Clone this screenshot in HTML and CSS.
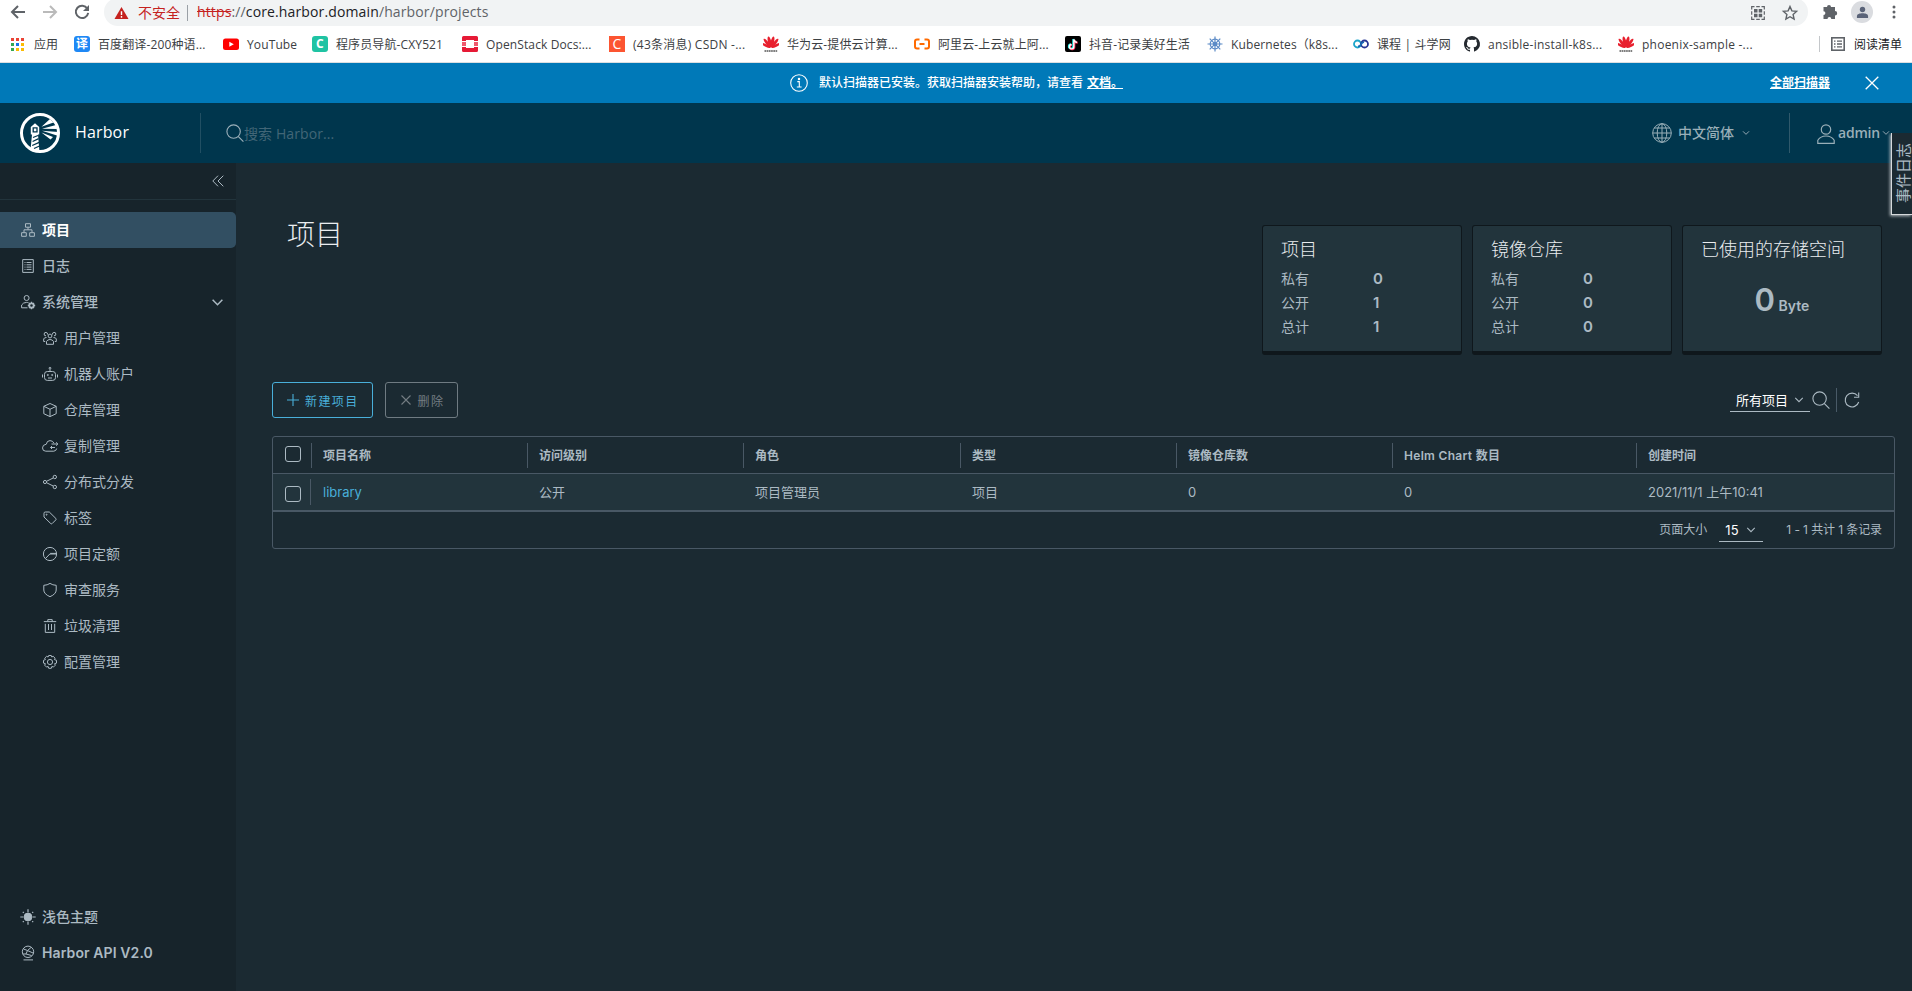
FILE: index.html
```html
<!DOCTYPE html>
<html lang="zh-CN">
<head>
    <meta charset="UTF-8">
    <meta name="viewport" content="width=device-width, initial-scale=1.0">
    <title>Harbor</title>
    <link rel="stylesheet" href="styles.css">
</head>
<body>
    <!-- Icon definitions -->
    <svg class="icon-defs">
        <symbol id="i-huawei" viewBox="0 0 16 16">
            <g fill="#e8202e">
                <ellipse cx="8" cy="5.800" rx="1.700" ry="5.600" transform="rotate(-13 8 12)"/>
                <ellipse cx="8" cy="5.800" rx="1.700" ry="5.600" transform="rotate(13 8 12)"/>
                <ellipse cx="8" cy="5.700" rx="1.500" ry="5.300" transform="rotate(-38 8 12)"/>
                <ellipse cx="8" cy="5.700" rx="1.500" ry="5.300" transform="rotate(38 8 12)"/>
                <ellipse cx="8" cy="6.500" rx="1.300" ry="4.700" transform="rotate(-64 8 12)"/>
                <ellipse cx="8" cy="6.500" rx="1.300" ry="4.700" transform="rotate(64 8 12)"/>
            </g>
            <path d="M1.500 15h13" stroke="#555" stroke-width="1.600" stroke-dasharray="1.700 .5"/>
        </symbol>
        <symbol id="i-search" viewBox="0 0 18 18">
            <circle cx="7.6" cy="7.6" r="6.7"/><path d="M12.4 12.6l5 5"/>
        </symbol>
        <symbol id="i-down" viewBox="0 0 12 12">
            <path d="M1.5 3.5L6 8l4.500-4.500"/>
        </symbol>
    </svg>

    <!-- Browser chrome -->
    <div class="toolbar">
        <svg class="tool-icon back" viewBox="0 0 16 16"><path d="M15 8H2M8 2L2 8l6 6"/></svg>
        <svg class="tool-icon forward" viewBox="0 0 16 16"><path d="M1 8h13M8 2l6 6-6 6"/></svg>
        <svg class="tool-icon reload" viewBox="0 0 16 16"><path d="M13.300 4.500A6.200 6.200 0 1 0 14.200 8.800"/><path d="M15 1v6H9z" class="solid"/></svg>
        <div class="address">
            <svg class="warn" viewBox="0 0 16 14"><path d="M8 .5L15.500 13.500H.5z" fill="#c5221f"/><path d="M8 5v4M8 10.300v1.700" stroke="#fff" stroke-width="1.500"/></svg>
            <span class="insecure">不安全</span>
            <span class="bar"></span>
            <span class="url"><s>https</s>://<b>core.harbor.domain</b>/harbor/projects</span>
            <svg class="qr" viewBox="0 0 14 14"><path d="M.7 3.500V.7h2.800M10.500.7h2.800v2.800M13.300 10.500v2.800h-2.800M3.500 13.300H.7v-2.800M5.200.7h3.600M5.200 13.300h3.600M.7 5.200v3.600M13.300 5.200v3.600" fill="none" stroke="#5f6368" stroke-width="1.200"/><path d="M3 3h3.500v3.500H3zM7.700 3h3.500v3.500H7.700zM3 7.700h3.500v3.500H3zM7.700 7.700h3.500v3.500H7.700z" fill="#5f6368"/></svg>
            <svg class="star" viewBox="0 0 16 16"><path d="M8 1.600l1.900 4.300 4.700.5-3.500 3.100 1 4.600L8 11.700l-4.100 2.400 1-4.600L1.400 6.400l4.700-.5z" fill="none" stroke="#5f6368" stroke-width="1.400"/></svg>
        </div>
        <svg class="puzzle" viewBox="0 0 16 16"><path d="M5 3a2 2 0 0 1 4 0h4v4a2.200 2.200 0 0 1 0 4.400V15H9.300a1.900 1.900 0 0 0-3.800 0H1.500v-4a1.900 1.900 0 0 0 0-3.800V3z" fill="#5f6368"/></svg>
        <span class="avatar"><svg viewBox="0 0 14 14"><circle cx="7" cy="3.700" r="2.900"/><path d="M1 13V10.800C1 8.600 4 7.700 7 7.700s6 .9 6 3.100V13z"/></svg></span>
        <svg class="dots" viewBox="0 0 4 16"><circle cx="2" cy="3" r="1.500"/><circle cx="2" cy="8" r="1.500"/><circle cx="2" cy="13" r="1.500"/></svg>
    </div>

    <div class="bookmarks">
        <div class="bookmark apps">
            <svg viewBox="0 0 13 13"><path d="M0 0h3v3H0zM5 0h3v3H5zM10 0h3v3h-3z" fill="#ea4335"/><path d="M0 5h3v3H0zM0 10h3v3H0z" fill="#34a853"/><path d="M5 5h3v3H5z" fill="#1a73e8"/><path d="M10 5h3v3h-3zM5 10h3v3H5zM10 10h3v3h-3z" fill="#fbbc04"/></svg>
            <span>应用</span>
        </div>
        <div class="bookmark"><i class="fav fav-fanyi">译</i><span>百度翻译-200种语...</span></div>
        <div class="bookmark"><svg viewBox="0 0 16 16"><rect y="2.500" width="16" height="11.500" rx="2.500" fill="#f00"/><path d="M6.300 5.800l4.500 2.500-4.500 2.500z" fill="#fff"/></svg><span>YouTube</span></div>
        <div class="bookmark"><i class="fav fav-cxy">C</i><span>程序员导航-CXY521</span></div>
        <div class="bookmark"><svg viewBox="0 0 16 16"><path d="M0 5V1.500Q0 0 1.500 0h13Q16 0 16 1.500V5h-4V4H4v1zM0 11v3.500Q0 16 1.500 16h13q1.500 0 1.500-1.500V11h-4v1H4v-1z" fill="#e61a36"/><path d="M0 6h4v4H0zM12 6h4v4h-4z" fill="#ef5a6e"/></svg><span>OpenStack Docs:...</span></div>
        <div class="bookmark"><i class="fav fav-csdn">C</i><span class="wide">(43条消息) CSDN -...</span></div>
        <div class="bookmark"><svg><use href="#i-huawei"/></svg><span>华为云-提供云计算...</span></div>
        <div class="bookmark"><svg viewBox="0 0 16 16"><path d="M5.500 3.500H3Q1 3.500 1 5.500v5q0 2 2 2h2.500M10.500 3.500H13q2 0 2 2v5q0 2-2 2h-2.500M5.500 8h5" fill="none" stroke="#ff6a00" stroke-width="2"/></svg><span>阿里云-上云就上阿...</span></div>
        <div class="bookmark"><svg viewBox="0 0 16 16"><rect width="16" height="16" rx="2" fill="#000"/><g fill="none" stroke-width="1.900"><path d="M8.200 3v7.300a2.200 2.200 0 1 1-2.200-2.200M8.200 3q.4 2.700 3.300 3" stroke="#25f4ee"/><path d="M9.400 3.800v7.200A2.200 2.200 0 1 1 7 8.900M9.400 3.800q.4 2.700 3.300 3" stroke="#fe2c55"/><path d="M8.800 3.400v7.200a2.200 2.200 0 1 1-2.300-2.100M8.800 3.400q.4 2.700 3.300 3" stroke="#fff" stroke-width="1.400"/></g></svg><span>抖音-记录美好生活</span></div>
        <div class="bookmark"><svg viewBox="0 0 16 16"><g fill="none" stroke="#5b8ac6" stroke-width="1.200"><circle cx="8" cy="8" r="4.800"/><path d="M8 .5v15M.5 8h15M2.700 2.700l10.600 10.600M13.300 2.700L2.700 13.300"/></g><circle cx="8" cy="8" r="2.300" fill="#5b8ac6"/></svg><span>Kubernetes（k8s...</span></div>
        <div class="bookmark"><svg viewBox="0 0 16 16"><g fill="none" stroke-width="1.800"><circle cx="4.500" cy="8" r="3.500" stroke="#1ca5c9"/><circle cx="11.500" cy="8" r="3.500" stroke="#283593"/><path d="M5 10.500q2 0 3-2t3-2.500" stroke="#1769b5"/></g></svg><span>课程 | 斗学网</span></div>
        <div class="bookmark"><svg viewBox="0 0 16 16"><path d="M8 0C3.580 0 0 3.580 0 8c0 3.540 2.290 6.530 5.470 7.590.4.070.55-.17.55-.38v-1.490C4 14.090 3.480 13.220 3.320 12.770c-.09-.23-.48-.94-.82-1.130-.28-.15-.68-.52-.01-.53.63-.01 1.080.58 1.230.82.720 1.210 1.870.87 2.330.66.070-.52.28-.87.510-1.070-1.780-.2-3.640-.89-3.640-3.950 0-.87.31-1.590.82-2.150-.08-.2-.36-1.020.080-2.120 0 0 .67-.21 2.200.82a7.600 7.600 0 0 1 4 0c1.530-1.040 2.200-.82 2.200-.82.440 1.100.160 1.920.080 2.120.51.56.82 1.270.82 2.150 0 3.070-1.870 3.750-3.650 3.950.29.250.54.730.54 1.480v2.200c0 .21.150.46.550.38A8 8 0 0 0 8 0z" fill="#24292f"/></svg><span class="wide">ansible-install-k8s...</span></div>
        <div class="bookmark"><svg><use href="#i-huawei"/></svg><span class="wide">phoenix-sample -...</span></div>
        <div class="bookmark reading">
            <svg viewBox="0 0 14 14"><rect x=".8" y=".8" width="12.400" height="12.400" fill="none" stroke="#5f6368" stroke-width="1.600"/><path d="M3 4.200h1.500M3 7h1.500M3 9.800h1.500M6 4.200h5M6 7h5M6 9.800h5" stroke="#5f6368" stroke-width="1.300"/></svg>
            <span>阅读清单</span>
        </div>
    </div>

    <!-- Scanner notice -->
    <div class="notice">
        <div class="notice-text">
            <svg viewBox="0 0 18 18"><circle cx="9" cy="9" r="8.300"/><path d="M7.300 7.600h2v5.400M6.800 13h4.800"/><circle cx="9" cy="5" r=".7" fill="#fff"/></svg>
            <span>默认扫描器已安装。获取扫描器安装帮助，请查看</span>
            <a>文档。</a>
        </div>
        <a class="all-scanners">全部扫描器</a>
        <svg class="close" viewBox="0 0 14 14"><path d="M.7.7l12.600 12.600M13.300.7L.7 13.300"/></svg>
    </div>

    <!-- Header -->
    <header class="header">
        <svg class="logo" viewBox="0 0 40 40">
            <circle cx="20" cy="20" r="18.500" fill="none" stroke="#fff" stroke-width="3"/>
            <path d="M10.500 37l1.500-15.500h-1.200V14l4.200-3.800 4.200 3.800v7.500H18L19.500 39q-5 0-9-2z" fill="#fff"/>
            <path d="M13.200 14.800h3.800v4h-3.800zM13 24.500l5-2M12.600 28.500l6-2.800M12.200 32.500l7-3.200M14 35.500l5.500-2.500" fill="none" stroke="#00364d" stroke-width="1.300"/>
            <path d="M21.500 13.800L30 6l3.500 3.500zM22 15.800L36 12l1 4zM22 17.800L38.500 19v4zM21.500 19.500L33 24l-2.500 2.500z" fill="#fff"/>
        </svg>
        <span class="brand">Harbor</span>
        <div class="search">
            <svg><use href="#i-search"/></svg>
            <span>搜索 Harbor...</span>
        </div>
        <div class="lang">
            <svg class="globe" viewBox="0 0 20 20"><circle cx="10" cy="10" r="9.300"/><ellipse cx="10" cy="10" rx="4.800" ry="9.300"/><path d="M10 .7v18.600M.7 10h18.600M2.300 5h15.400M2.300 15h15.400"/></svg>
            <span>中文简体</span>
            <svg class="caret"><use href="#i-down"/></svg>
        </div>
        <div class="user">
            <svg class="person" viewBox="0 0 18 20"><circle cx="9" cy="5.500" r="4.700"/><path d="M.8 19.300v-3q2.700-4.300 8.200-4.300t8.200 4.300v3z"/></svg>
            <span>admin</span>
            <svg class="caret"><use href="#i-down"/></svg>
        </div>
    </header>

    <div class="event-log"><span>事件日志</span></div>

    <div class="layout">
        <!-- Sidebar -->
        <nav class="sidebar">
            <div class="collapse"><svg viewBox="0 0 12 12"><path d="M6 .7L.8 6 6 11.300M11.300.7L6 6l5.300 5.300"/></svg></div>
            <a class="item active"><svg viewBox="0 0 14 14"><path d="M4.500.7h5v3.500h-5zM.6 9.700h4.700v3.600H.6zM8.700 9.700h4.700v3.600H8.700zM7 4.200v2.500M3 9.500V6.800h8v2.700"/></svg>项目</a>
            <a class="item"><svg viewBox="0 0 14 14"><path d="M1.700.6h10.600v12.800H1.700zM3.500 3.500h1M5.500 3.500h5M3.500 5.800h1M5.500 5.800h5M3.500 8.100h1M5.500 8.100h5M3.500 10.400h1M5.500 10.400h5"/></svg>日志</a>
            <a class="item"><svg viewBox="0 0 14 14"><circle cx="5.600" cy="3" r="2.500"/><path d="M6.500 12.800H.6V10q1.600-2.600 5-2.600 1.200 0 2 .4"/><circle cx="10.500" cy="10.500" r="2.200" stroke-width="1.800"/><path d="M10.500 6.800v1.500M10.500 12.700v1.500M6.800 10.500h1.500M12.700 10.500h1.500M8 8l.8.8M12.200 12.200l.8.8M8 13l.8-.8M12.200 8.800L13 8" stroke-width="1.300"/></svg>系统管理<svg class="expand"><use href="#i-down"/></svg></a>
            <a class="item sub"><svg viewBox="0 0 14 14"><circle cx="7" cy="5" r="1.900"/><path d="M3.500 13.300V10.500Q4.500 8.500 7 8.500t3.500 2v2.800zM4.500 3.500A1.700 1.700 0 1 0 3 4.800M9.500 3.500A1.700 1.700 0 1 1 11 4.800M3.500 6.500Q1 6.500.7 8v2.500h1.500M10.500 6.500q2.500 0 2.800 1.500v2.500h-1.500"/></svg>用户管理</a>
            <a class="item sub"><svg viewBox="0 0 14 14"><rect x="1.500" y="4.500" width="11" height="8.900" rx="2.800"/><path d="M7 4.500V2.300M-.5 7.500v3M14.500 7.500v3M5 11h4"/><circle cx="7" cy="1.200" r=".9"/><circle cx="4.800" cy="8" r=".6"/><circle cx="9.200" cy="8" r=".6"/></svg>机器人账户</a>
            <a class="item sub"><svg viewBox="0 0 14 14"><path d="M7 .5l6.200 2.800v7.400L7 13.600l-6.200-2.900V3.300zM.8 3.300L7 6.300l6.200-3M7 6.300v7.200"/></svg>仓库管理</a>
            <a class="item sub"><svg viewBox="0 0 14 14"><path d="M11 4.200Q9.800 1.600 7 1.600 3.800 1.600 3.300 5.200-.5 5.700-.5 8.900q0 3.300 3.300 3.300h8q2.500-.3 2.900-2.700M8.500 5H15M13 3.300L14.800 5 13 6.700M12 8.500H7.500M9 7L7.500 8.500 9 10"/></svg>复制管理</a>
            <a class="item sub"><svg viewBox="0 0 14 14"><circle cx="2" cy="7" r="1.600"/><circle cx="11.800" cy="2" r="1.700"/><circle cx="11.800" cy="12" r="1.700"/><path d="M3.500 6.300L10.200 3M3.500 7.700L10.200 11"/></svg>分布式分发</a>
            <a class="item sub"><svg viewBox="0 0 14 14"><path d="M1 2.300V6l6.800 6.600q.7.500 1.300 0l3.800-3.800q.5-.7 0-1.300L6.300 1H2.300Q1 1 1 2.300z"/><circle cx="3.600" cy="3.700" r=".5"/></svg>标签</a>
            <a class="item sub"><svg viewBox="0 0 14 14"><circle cx="7" cy="7" r="6.600"/><path d="M2.500 11.500L6.800 7H13.300M7.200 6.400h6.100"/></svg>项目定额</a>
            <a class="item sub"><svg viewBox="0 0 14 14"><path d="M7 .4q2.600 1.800 6.200 1.900v4.700q0 4-6.200 6.700-6.200-2.700-6.200-6.700V2.300Q4.400 2.200 7 .4z"/></svg>审查服务</a>
            <a class="item sub"><svg viewBox="0 0 14 14"><path d="M.8 2.600h12.400M4.800 2.500V.6h4.400v1.900M2.300 4.800v8.600h9.400V4.800M5.500 5v6M8.500 5v6"/></svg>垃圾清理</a>
            <a class="item sub"><svg viewBox="0 0 14 14"><circle cx="7" cy="7" r="2.600"/><path d="M5.700.5h2.600l.5 1.500 1.400-.7 1.900 1.900-.7 1.400 2.100.7v2.800l-1.900.6.700 1.500-1.900 1.900-1.500-.7-.6 1.900H5.700l-.6-1.900-1.500.7-1.900-1.900.7-1.500L.5 8.100V5.300l1.900-.7-.7-1.400 1.900-1.900 1.500.7z"/></svg>配置管理</a>
            <div class="sidebar-bottom">
                <a class="item"><svg viewBox="0 0 14 14"><circle cx="7" cy="7" r="3.900" fill="#acbac3"/><path d="M7-.7v3M7 11.700v3M-.7 7h3M11.700 7h3M1.800 1.800l1 1M11.200 11.200l1 1M1.800 12.200l1-1M11.200 2.800l1-1" stroke-width="1.200"/></svg>浅色主题</a>
                <a class="item api"><svg viewBox="0 0 14 14"><circle cx="7" cy="5.800" r="5.700"/><path d="M2.500 3l4 1.500L10 1.500M6.500 4.500L5 8l5.500 1.500M5 8L2 8M6.500 4.500L12 7M2.500 13.900h9.500"/></svg>Harbor API V2.0</a>
            </div>
        </nav>

        <!-- Content -->
        <main class="content">
            <section class="summary">
                <h1>项目</h1>
                <div class="card">
                    <h2>项目</h2>
                    <dl><dt>私有</dt><dd>0</dd><dt>公开</dt><dd>1</dd><dt>总计</dt><dd>1</dd></dl>
                </div>
                <div class="card">
                    <h2>镜像仓库</h2>
                    <dl><dt>私有</dt><dd>0</dd><dt>公开</dt><dd>0</dd><dt>总计</dt><dd>0</dd></dl>
                </div>
                <div class="card">
                    <h2>已使用的存储空间</h2>
                    <p class="storage"><strong>0</strong> Byte</p>
                </div>
            </section>

            <section class="actions">
                <button class="btn btn-new"><svg viewBox="0 0 12 12"><path d="M6 0v12M0 6h12"/></svg>新建项目</button>
                <button class="btn btn-delete"><svg viewBox="0 0 12 12"><path d="M1.500 1.500l9 9M10.500 1.500l-9 9"/></svg>删除</button>
                <div class="filter">所有项目<svg class="caret"><use href="#i-down"/></svg></div>
                <svg class="find"><use href="#i-search"/></svg>
                <span class="split"></span>
                <svg class="refresh" viewBox="0 0 16 16"><path d="M13.500 3.700A6.900 6.900 0 1 0 14.700 10M14.700.5v4.700H10"/></svg>
            </section>

            <section class="grid">
                <div class="row head">
                    <div class="check"><i></i></div>
                    <div>项目名称</div>
                    <div>访问级别</div>
                    <div>角色</div>
                    <div>类型</div>
                    <div>镜像仓库数</div>
                    <div class="helm">Helm Chart 数目</div>
                    <div>创建时间</div>
                </div>
                <div class="row data">
                    <div class="check"><i></i></div>
                    <div><a>library</a></div>
                    <div>公开</div>
                    <div>项目管理员</div>
                    <div>项目</div>
                    <div>0</div>
                    <div>0</div>
                    <div>2021/11/1 上午10:41</div>
                </div>
                <div class="grid-foot">
                    <span>页面大小</span>
                    <div class="page-size">15<svg class="caret"><use href="#i-down"/></svg></div>
                    <span class="total">1 - 1 共计 1 条记录</span>
                </div>
            </section>
        </main>
    </div>
</body>
</html>
```
FILE: styles.css
```css
/* Base Styles */
* {
    box-sizing: border-box;
}

body {
    margin: 0;
    height: 991px;
    overflow: hidden;
    display: flex;
    flex-direction: column;
    font-family: Inter, "Noto Sans CJK SC", sans-serif;
    font-size: 14px;
    line-height: 24px;
    background-color: #1b2a32;
    color: #acbac3;
    position: relative;
}

svg {
    flex: none;
    overflow: visible;
}

.icon-defs {
    position: absolute;
    width: 0;
    height: 0;
}

/* Browser toolbar */
.toolbar {
    display: flex;
    align-items: center;
    flex: none;
    height: 26px;
    padding: 0 0 2px 10px;
    background-color: #fff;
    font-family: "Open Sans", "Noto Sans CJK SC", sans-serif;
}

.tool-icon {
    width: 16px;
    height: 16px;
    fill: none;
    stroke: #5f6368;
    stroke-width: 2;
    margin-right: 16px;
}

.tool-icon.forward {
    stroke: #bababa;
}

.tool-icon.reload {
    margin-right: 14px;
}

.tool-icon .solid {
    fill: #5f6368;
    stroke: none;
}

.address {
    display: flex;
    align-items: center;
    width: 1704px;
    height: 28px;
    margin-top: -2px;
    padding: 2px 10px 0 10px;
    background-color: #f1f3f4;
    border-radius: 14px;
    align-self: flex-end;
    margin-bottom: -2px;
}

.warn {
    width: 15px;
    height: 14px;
}

.insecure {
    margin-left: 9px;
    color: #c5221f;
    width: 43px;
}

.bar {
    width: 1px;
    height: 16px;
    margin: 0 9px 0 6px;
    background-color: #9aa0a6;
}

.url {
    flex: 1;
    margin-top: -2px;
    color: #5f6368;
    letter-spacing: 0.13px;
}

.url s {
    color: #c5221f;
}

.url b {
    font-weight: 400;
    color: #202124;
}

.qr {
    width: 14px;
    height: 14px;
    margin-right: 17px;
}

.star {
    width: 16px;
    height: 16px;
}

.puzzle {
    width: 16px;
    height: 16px;
    margin-left: 14px;
}

.avatar {
    display: flex;
    align-items: center;
    justify-content: center;
    width: 22px;
    height: 22px;
    margin: 0 19px 0 13px;
    border-radius: 50%;
    background-color: #dadce0;
}

.avatar svg {
    width: 13px;
    height: 13px;
    fill: #5a6378;
}

.dots {
    width: 4px;
    height: 16px;
    fill: #5f6368;
}

/* Bookmarks */
.bookmarks {
    display: grid;
    grid-template-columns: 63px 149px 89px 150px 147px 154px 151px 151px 142px 146px 111px 154px 201px 1fr;
    align-items: center;
    flex: none;
    height: 37px;
    padding-left: 11px;
    border-bottom: 1px solid #dcdfe1;
    background-color: #fff;
    color: #3c4043;
    font-family: "Open Sans", "Noto Sans CJK SC", sans-serif;
    font-size: 12px;
}

.bookmark {
    display: flex;
    align-items: center;
    gap: 8px;
    white-space: nowrap;
    letter-spacing: 0.12px;
}

.bookmark span {
    padding-top: 2px;
}

.bookmark svg {
    width: 16px;
    height: 16px;
}

.bookmark .wide {
    letter-spacing: 0.24px;
}

.bookmark.apps {
    gap: 10px;
}

.bookmark.apps svg {
    width: 13px;
    height: 13px;
}

.bookmark.reading {
    gap: 9px;
    padding-left: 11px;
    height: 16px;
    border-left: 1px solid #c4c7ca;
    color: #202124;
    letter-spacing: 0;
}

.bookmark.reading svg {
    width: 14px;
    height: 14px;
}

.fav {
    width: 16px;
    height: 16px;
    border-radius: 3px;
    color: #fff;
    font-style: normal;
    font-size: 12px;
    font-weight: 700;
    line-height: 16px;
    text-align: center;
}

.fav-fanyi {
    background-color: #1e88f5;
}

.fav-cxy {
    background-color: #1fc3a3;
}

.fav-csdn {
    background-color: #fc5531;
    border-radius: 0;
    font-size: 14px;
    font-weight: 400;
}

/* Scanner notice */
.notice {
    display: flex;
    align-items: center;
    flex: none;
    height: 40px;
    padding-right: 33px;
    background-color: #0079b8;
    color: #fff;
    font-size: 12px;
    font-weight: 500;
}

.notice-text {
    display: flex;
    align-items: center;
    flex: 1;
    padding-left: 790px;
}

.notice-text svg {
    width: 18px;
    height: 18px;
    margin-right: 11px;
    fill: none;
    stroke: #fff;
    stroke-width: 1.1;
}

.notice a {
    text-decoration: underline;
    font-weight: 700;
}

.notice-text a {
    margin-left: 4px;
}

.notice .close {
    width: 14px;
    height: 14px;
    margin-left: 35px;
    stroke: #fff;
    stroke-width: 1.3;
}

/* Header */
.header {
    display: flex;
    align-items: center;
    flex: none;
    height: 60px;
    padding-left: 20px;
    background-color: #00364d;
    font-weight: 500;
}

.logo {
    width: 40px;
    height: 40px;
}

.brand {
    width: 125px;
    margin: -2px 0 0 15px;
    color: #fff;
    font-family: "Open Sans", sans-serif;
    font-size: 16px;
    font-weight: 400;
    letter-spacing: 0.15px;
}

.search {
    display: flex;
    align-items: center;
    flex: 1;
    height: 40px;
    padding-left: 25px;
    border-left: 1px solid #214f63;
    color: #426677;
    font-family: "Open Sans", "Noto Sans CJK SC", sans-serif;
    font-weight: 400;
    letter-spacing: 0.1px;
}

.search span {
    padding-top: 2px;
}

.search svg {
    width: 18px;
    height: 18px;
    fill: none;
    stroke: #9bb0ba;
    stroke-width: 1.1;
}

.lang,
.user {
    display: flex;
    align-items: center;
    height: 40px;
    font-family: "Open Sans", "Noto Sans CJK SC", sans-serif;
    font-weight: 600;
    color: #99afb8;
}

.lang span {
    font-weight: 500;
}

.globe {
    width: 20px;
    height: 20px;
    margin-right: 6px;
    fill: none;
    stroke: #99afb8;
}

.caret {
    width: 10px;
    height: 10px;
    fill: none;
    stroke: #acbac3;
    stroke-width: 1.3;
}

.lang .caret {
    width: 8px;
    height: 8px;
    margin: 0 39px 0 8px;
}

.user {
    width: 123px;
    padding-left: 27px;
    border-left: 1px solid #30596b;
}

.user span {
    width: 41px;
    margin: 0 3px;
    letter-spacing: -0.2px;
}

.user .caret {
    width: 8px;
    height: 8px;
}

.person {
    width: 18px;
    height: 20px;
    margin-top: 2px;
    fill: none;
    stroke: #99afb8;
    stroke-width: 1.2;
}

/* Event log tab, pinned over the right edge */
.event-log {
    position: absolute;
    right: 0;
    top: 133px;
    width: 21px;
    height: 82px;
    display: flex;
    align-items: center;
    padding-left: 4px;
    background-color: #1b2a32;
    border-left: 1px solid #d5d9dc;
    border-bottom: 1px solid #d5d9dc;
    box-shadow: -1px 1px 3px #b8bec2;
    clip-path: inset(0 0 -4px -4px);
}

.event-log span {
    writing-mode: vertical-rl;
    text-orientation: sideways;
    transform: rotate(180deg);
    font-size: 15px;
    line-height: 16px;
    white-space: nowrap;
}

.layout {
    display: flex;
    flex: 1;
}

/* Sidebar */
.sidebar {
    display: flex;
    flex-direction: column;
    width: 236px;
    background-color: #17242b;
}

.collapse {
    display: flex;
    justify-content: flex-end;
    align-items: center;
    height: 37px;
    margin-bottom: 12px;
    padding-right: 12px;
    border-bottom: 1px solid #22343c;
}

.collapse svg {
    width: 12px;
    height: 12px;
    fill: none;
    stroke: #acbac3;
}

.item {
    display: flex;
    align-items: center;
    height: 36px;
    padding-left: 21px;
    font-weight: 500;
}

.item svg {
    width: 14px;
    height: 14px;
    margin-right: 7px;
    fill: none;
    stroke: #acbac3;
    stroke-width: 1;
}

.item.sub {
    padding-left: 43px;
    font-weight: 400;
}

.item.active {
    border-radius: 0 5px 5px 0;
    background-color: #324f62;
    color: #fff;
    font-weight: 700;
}

.item svg.expand {
    width: 13px;
    height: 13px;
    margin: 0 12px 0 auto;
    stroke-width: 1.4;
}

.sidebar-bottom {
    margin: auto 0 20px;
}

.item.api {
    font-weight: 600;
    letter-spacing: 0.1px;
}

/* Content */
.content {
    flex: 1;
    padding: 62px 17px 0 36px;
}

.summary {
    display: flex;
    gap: 10px;
    height: 130px;
    padding-right: 13px;
}

h1 {
    flex: 1;
    margin: -8px 0 0 15px;
    font-size: 28px;
    font-weight: 300;
    line-height: 36px;
    color: #eaedf0;
}

.card {
    width: 200px;
    padding: 12px 18px 0;
    background-color: #22343c;
    border: 1px solid #0f171c;
    border-bottom-width: 4px;
    border-radius: 3px;
}

.card h2 {
    margin: 0 0 5px;
    font-size: 18px;
    font-weight: 300;
    line-height: 24px;
    color: #eaedf0;
    white-space: nowrap;
}

.card dl {
    display: grid;
    grid-template-columns: 92px 1fr;
    margin: 0;
}

.card dd {
    margin: 0;
    font-weight: 600;
    font-size: 15px;
}

.storage {
    margin: 18px 0 0;
    text-align: center;
    font-weight: 600;
    line-height: 40px;
}

.storage strong {
    font-size: 31px;
    font-weight: 600;
}

/* Action bar */
.actions {
    display: flex;
    align-items: center;
    height: 36px;
    margin: 27px 0 18px;
    padding-right: 35px;
}

.btn {
    display: flex;
    align-items: center;
    height: 36px;
    margin-right: 12px;
    padding: 0 13px 0 14px;
    background: transparent;
    border: 1px solid #49afd9;
    border-radius: 3px;
    color: #49afd9;
    font-family: inherit;
    font-size: 12px;
    letter-spacing: 1.4px;
}

.btn svg {
    width: 12px;
    height: 12px;
    margin-right: 6px;
    stroke: currentColor;
    stroke-width: 1.1;
}

.btn-delete {
    border-color: #6f7b82;
    color: #747d83;
}

.filter {
    display: flex;
    align-items: center;
    width: 80px;
    height: 24px;
    margin-left: auto;
    padding-left: 6px;
    border-bottom: 1px solid #acbac3;
    color: #fff;
    font-size: 13px;
}

.filter .caret {
    margin-left: 6px;
}

.find {
    width: 18px;
    height: 18px;
    margin-left: 2px;
    fill: none;
    stroke: #acbac3;
    stroke-width: 1.1;
}

.split {
    width: 1px;
    height: 24px;
    margin: 0 7px 0 6px;
    background-color: #495a67;
}

.refresh {
    width: 16px;
    height: 16px;
    fill: none;
    stroke: #acbac3;
    stroke-width: 1.1;
}

/* Project grid */
.grid {
    border: 1px solid #495865;
    border-radius: 3px;
}

.row {
    display: grid;
    grid-template-columns: 38px 216px 216px 217px 216px 216px 244px 1fr;
    height: 37px;
    border-bottom: 1px solid #495865;
}

.row > div {
    display: flex;
    align-items: center;
    padding-left: 12px;
}

.check i {
    width: 16px;
    height: 16px;
    border: 1px solid #acbac3;
    border-radius: 3px;
}

.head {
    font-size: 12px;
    font-weight: 600;
}

.head > div + div {
    height: 25px;
    margin-top: 6px;
    padding-left: 11px;
    border-left: 1px solid #495865;
}

.head .check {
    height: 34px;
}

.head .helm {
    letter-spacing: 0.3px;
}

.data {
    background-color: #22343c;
    border-bottom-width: 2px;
    height: 38px;
    font-size: 13px;
    line-height: 18px;
}

.data > div {
    height: 35px;
}

.data .check {
    height: 26px;
    margin-top: 5px;
    padding-top: 3px;
    border-right: 1px solid #495865;
}

.data a {
    color: #49afd9;
}

.grid-foot {
    display: flex;
    align-items: center;
    justify-content: flex-end;
    height: 36px;
    padding-right: 12px;
    font-size: 12px;
}

.page-size {
    display: flex;
    align-items: center;
    width: 44px;
    height: 24px;
    margin: 0 23px 0 12px;
    padding-left: 6px;
    border-bottom: 1px solid #acbac3;
    color: #fff;
    font-size: 13px;
}

.page-size .caret {
    margin-left: 7px;
}

.total {
    letter-spacing: -0.1px;
}
```
